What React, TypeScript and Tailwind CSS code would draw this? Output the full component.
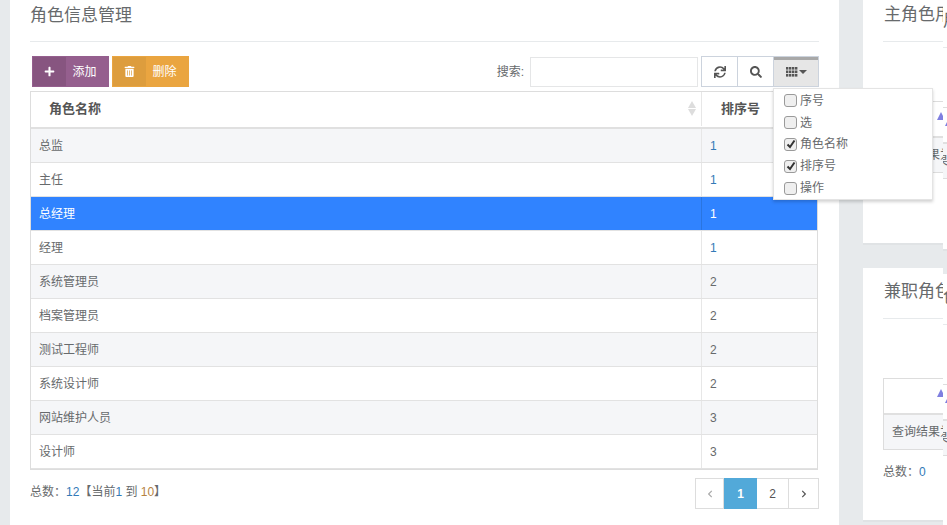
import { FaPlus, FaSearch, FaSync, FaTrashAlt, FaChevronLeft, FaChevronRight } from "react-icons/fa"

const font = "font-['Liberation_Sans','Noto_Sans_CJK_SC',sans-serif]"

const rows = [
  { name: "总监", sort: "1", link: true },
  { name: "主任", sort: "1", link: true },
  { name: "总经理", sort: "1", selected: true },
  { name: "经理", sort: "1", link: true },
  { name: "系统管理员", sort: "2" },
  { name: "档案管理员", sort: "2" },
  { name: "测试工程师", sort: "2" },
  { name: "系统设计师", sort: "2" },
  { name: "网站维护人员", sort: "3" },
  { name: "设计师", sort: "3" },
]

const columns = [
  { name: "序号", checked: false },
  { name: "选", checked: false },
  { name: "角色名称", checked: true },
  { name: "排序号", checked: true },
  { name: "操作", checked: false },
]

function GridIcon() {
  return (
    <svg width="12" height="10" viewBox="0 0 12 10" fill="#555">
      {[0, 3.5, 7].map((y) =>
        [0, 3, 6, 9].map((x) => <rect key={`${x}-${y}`} x={x} y={y} width="2.4" height="2.6" />)
      )}
    </svg>
  )
}

function Checkbox({ checked }: { checked: boolean }) {
  return (
    <span className="flex h-[13px] w-[13px] items-center justify-center rounded-[3px] border border-[#9a9a9a] bg-[#efefef]">
      {checked && (
        <svg width="10" height="10" viewBox="0 0 10 10" fill="none" stroke="#333" strokeWidth="2">
          <path d="M1.5 5.5 L4 8 L8.5 1.5" />
        </svg>
      )}
    </span>
  )
}

function ActionButton({ icon, label, color, dark }: { icon: React.ReactNode; label: string; color: string; dark: string }) {
  return (
    <button className={`flex h-[31px] w-[77px] items-stretch border border-transparent text-xs text-white ${color}`}>
      <span className={`flex w-[33px] items-center justify-center ${dark}`}>{icon}</span>
      <span className="flex flex-1 items-center justify-center pr-[5px]">{label}</span>
    </button>
  )
}

function RoleTable({ title }: { title: string }) {
  return (
    <div className="h-[254px] border-b-2 border-[#e0e3e5] bg-white px-[20px]">
      <h2 className="pt-[15px] pl-px text-[17px] leading-[18px] font-normal whitespace-nowrap text-[#676a6c]">{title}</h2>
      <div className="mt-[17px] h-px w-[300px] bg-[#e7eaec]" />
      <div className="mt-[59px] w-[300px] border border-[#ddd]">
        <div className="relative h-[36px] border-b-2 border-[#e0e0e0]">
          <span className="absolute top-[10px] left-[53px] h-0 w-0 border-x-[4px] border-b-[8px] border-x-transparent border-b-[#7f7fe0]" />
        </div>
        <div className="flex h-[34px] items-center bg-[#f5f6f8] pl-2 text-xs whitespace-nowrap text-[#676a6c]">查询结果为空</div>
      </div>
      <div className="mt-[14px] text-xs leading-4 whitespace-nowrap text-[#676a6c]">
        总数：<span className="text-[#337ab7]">0</span>
      </div>
    </div>
  )
}

function SideColumn() {
  return (
    <div className="flex w-[300px] flex-col gap-[23px]">
      <RoleTable title="主角色用户列表" />
      <RoleTable title="兼职角色用户列表" />
    </div>
  )
}

export default function App() {
  return (
    <div className={`${font} flex h-[525px] w-[947px] overflow-hidden bg-[#e7eaec] pl-[10px] text-[#676a6c]`}>
      <main className="-mt-[9px] h-[560px] w-[829px] shrink-0 bg-white px-5">
        <h1 className="pt-[16px] text-[17px] leading-[18px] font-normal text-[#676a6c]">角色信息管理</h1>
        <div className="mt-[16px] h-px bg-[#e7eaec]" />

        <div className="mt-[14px] flex h-[31px] items-start pl-[2px]">
          <ActionButton icon={<FaPlus size={11} />} label="添加" color="bg-[#955f8e]" dark="bg-[#875580]" />
          <div className="w-[3px]" />
          <ActionButton icon={<FaTrashAlt size={11} />} label="删除" color="bg-[#eaa540]" dark="bg-[#dd9d3d]" />

          <div className="ml-auto flex items-center">
            <span className="mr-[6px] text-xs">搜索:</span>
            <input className="h-[30px] w-[168px] border border-[#e5e6e7] bg-white outline-none" />
            <div className="ml-[3px] flex h-[31px] text-[#555]">
              <button className="flex w-[37px] items-center justify-center border border-[#ccd3dd]">
                <FaSync size={12} />
              </button>
              <button className="-ml-px flex w-[37px] items-center justify-center border border-[#ccd3dd]">
                <FaSearch size={12} />
              </button>
              <button className="relative -ml-px flex w-[46px] items-center justify-center gap-px border border-[#ccd3dd] bg-[#e6e6e6] shadow-[inset_0_3px_0_#a8a8a8]">
                <GridIcon />
                <span className="h-0 w-0 border-x-[4px] border-t-[4px] border-x-transparent border-t-[#555]" />
              </button>
            </div>
          </div>
        </div>

        <div className="relative mt-[4px] w-[788px] border border-[#ddd] text-xs">
          <div className="flex h-[37px] border-b-2 border-[#e0e0e0] pb-px text-[13px] font-bold text-[#555]">
            <div className="relative flex w-[671px] items-center border-r border-[#e7e7e7] pl-[18px]">
              角色名称
              <span className="absolute top-[9px] right-[5px] flex flex-col gap-[1px]">
                <span className="h-0 w-0 border-x-[4.5px] border-b-[7px] border-x-transparent border-b-[#ddd]" />
                <span className="h-0 w-0 border-x-[4.5px] border-t-[7px] border-x-transparent border-t-[#ddd]" />
              </span>
            </div>
            <div className="flex flex-1 items-center pl-[19px]">排序号</div>
          </div>

          {rows.map((row, i) => (
            <div
              key={row.name}
              className={`flex h-[34px] border-b border-[#e2e2e2] last:h-[33px] last:border-b-0 ${
                row.selected ? "bg-[#3083ff] text-white" : i % 2 === 0 ? "bg-[#f5f6f8]" : "bg-white"
              }`}
            >
              <div className={`flex w-[671px] items-center border-r pl-2 ${row.selected ? "border-[#2a75e0]" : "border-[#e7e7e7]"}`}>{row.name}</div>
              <div className={`flex flex-1 items-center pl-[8px] ${row.link ? "text-[#337ab7]" : ""}`}>{row.sort}</div>
            </div>
          ))}

          <div className="absolute top-[-4px] left-[742px] z-10 flex h-[112px] w-[160px] flex-col border border-[#e4e4e4] bg-white pt-px pl-[10px] shadow-[0_2px_3px_rgba(0,0,0,0.18)]">
            {columns.map((col) => (
              <label key={col.name} className="flex h-[22px] items-center gap-[3px] text-xs text-[#676a6c]">
                <Checkbox checked={col.checked} />
                {col.name}
              </label>
            ))}
          </div>
        </div>

        <div className="mt-[8px] flex items-start justify-between">
          <div className="pt-[6px] text-xs leading-4">
            总数：<span className="text-[#337ab7]">12</span>【当前<span className="text-[#337ab7]">1</span> 到 <span className="text-[#b5823f]">10</span>】
          </div>
          <div className="flex h-[31px] text-xs text-[#555]">
            <span className="flex w-[29px] items-center justify-center border border-[#ddd] text-[#aaa]">
              <FaChevronLeft size={8} />
            </span>
            <span className="flex w-[33px] items-center justify-center bg-[#52a9d9] font-bold text-white">1</span>
            <span className="flex w-[31px] items-center justify-center border-y border-[#ddd]">2</span>
            <span className="flex w-[31px] items-center justify-center border border-[#ddd]">
              <FaChevronRight size={8} />
            </span>
          </div>
        </div>
      </main>

      <div className="-mt-[9px] ml-[24px] w-[80px] shrink-0 overflow-hidden">
        <SideColumn />
      </div>
      <div className="-mt-[3px] w-[4px] shrink-0 overflow-hidden">
        <div className="-ml-[72px]">
          <SideColumn />
        </div>
      </div>
    </div>
  )
}
